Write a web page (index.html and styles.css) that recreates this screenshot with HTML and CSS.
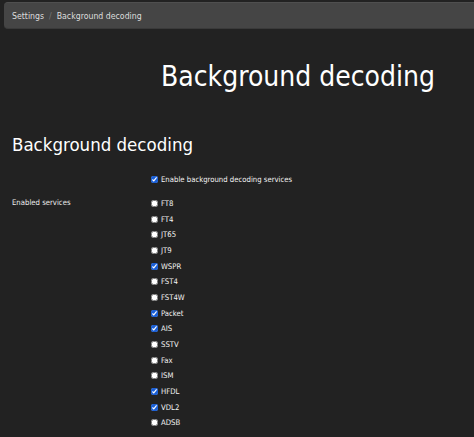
FILE: index.html
```html
<!DOCTYPE html>
<html lang="en">
<head>
  <meta charset="UTF-8">
  <title>Background decoding</title>
  <link rel="stylesheet" href="styles.css">
</head>
<body>
  <nav class="breadcrumb">
    <span class="crumb">Settings</span>
    <span class="crumb-sep">/</span>
    <span class="crumb active">Background decoding</span>
  </nav>

  <h1 class="page-title">Background decoding</h1>

  <div class="settings">
    <h2 class="section-title">Background decoding</h2>

    <div class="form-row">
      <div class="row-label"></div>
      <div class="row-control">
        <label class="check"><input type="checkbox" checked> Enable background decoding services</label>
      </div>
    </div>

    <div class="form-row">
      <div class="row-label">Enabled services</div>
      <div class="row-control">
        <label class="check"><input type="checkbox"> FT8</label>
        <label class="check"><input type="checkbox"> FT4</label>
        <label class="check"><input type="checkbox"> JT65</label>
        <label class="check"><input type="checkbox"> JT9</label>
        <label class="check"><input type="checkbox" checked> WSPR</label>
        <label class="check"><input type="checkbox"> FST4</label>
        <label class="check"><input type="checkbox"> FST4W</label>
        <label class="check"><input type="checkbox" checked> Packet</label>
        <label class="check"><input type="checkbox" checked> AIS</label>
        <label class="check"><input type="checkbox"> SSTV</label>
        <label class="check"><input type="checkbox"> Fax</label>
        <label class="check"><input type="checkbox"> ISM</label>
        <label class="check"><input type="checkbox" checked> HFDL</label>
        <label class="check"><input type="checkbox" checked> VDL2</label>
        <label class="check"><input type="checkbox"> ADSB</label>
      </div>
    </div>
  </div>
</body>
</html>
```

FILE: styles.css
```css
body {
  margin: 0;
  background-color: #222;
  color: #fff;
  font-family: 'DejaVu Sans Condensed', 'DejaVu Sans', Verdana, sans-serif;
}

.breadcrumb {
  display: flex;
  align-items: center;
  height: 25px;
  margin: 2px -10px 0 4px;
  padding: 0 8px;
  background-color: #454545;
  border-top: 1px solid #4f4f4f;
  border-bottom: 1px solid #3a3a3a;
  border-radius: 4px;
  font-size: 8.7px;
  color: #ddd;
}

.crumb-sep {
  margin: 0 5px;
  color: #777;
}

.page-title {
  margin: 32px 0 0 161px;
  font-size: 28px;
  font-weight: normal;
  line-height: 32px;
  white-space: nowrap;
}

.settings {
  padding: 0 12px;
}

.section-title {
  margin: 40.5px 0 16px;
  font-size: 18.5px;
  font-weight: normal;
  line-height: 22px;
  white-space: nowrap;
}

.form-row {
  display: flex;
  margin-bottom: 8.3px;
}

.row-label {
  width: 139px;
  font-size: 7.7px;
  line-height: 15.7px;
  color: #eee;
}

.row-control {
  display: flex;
  flex-direction: column;
}

.check {
  display: flex;
  align-items: center;
  height: 15.7px;
  font-size: 7.7px;
  color: #f4f4f4;
  white-space: nowrap;
}

.check input {
  width: 7px;
  height: 7px;
  margin: 0 3px 0 0;
  accent-color: #1a5fd6;
}
```
